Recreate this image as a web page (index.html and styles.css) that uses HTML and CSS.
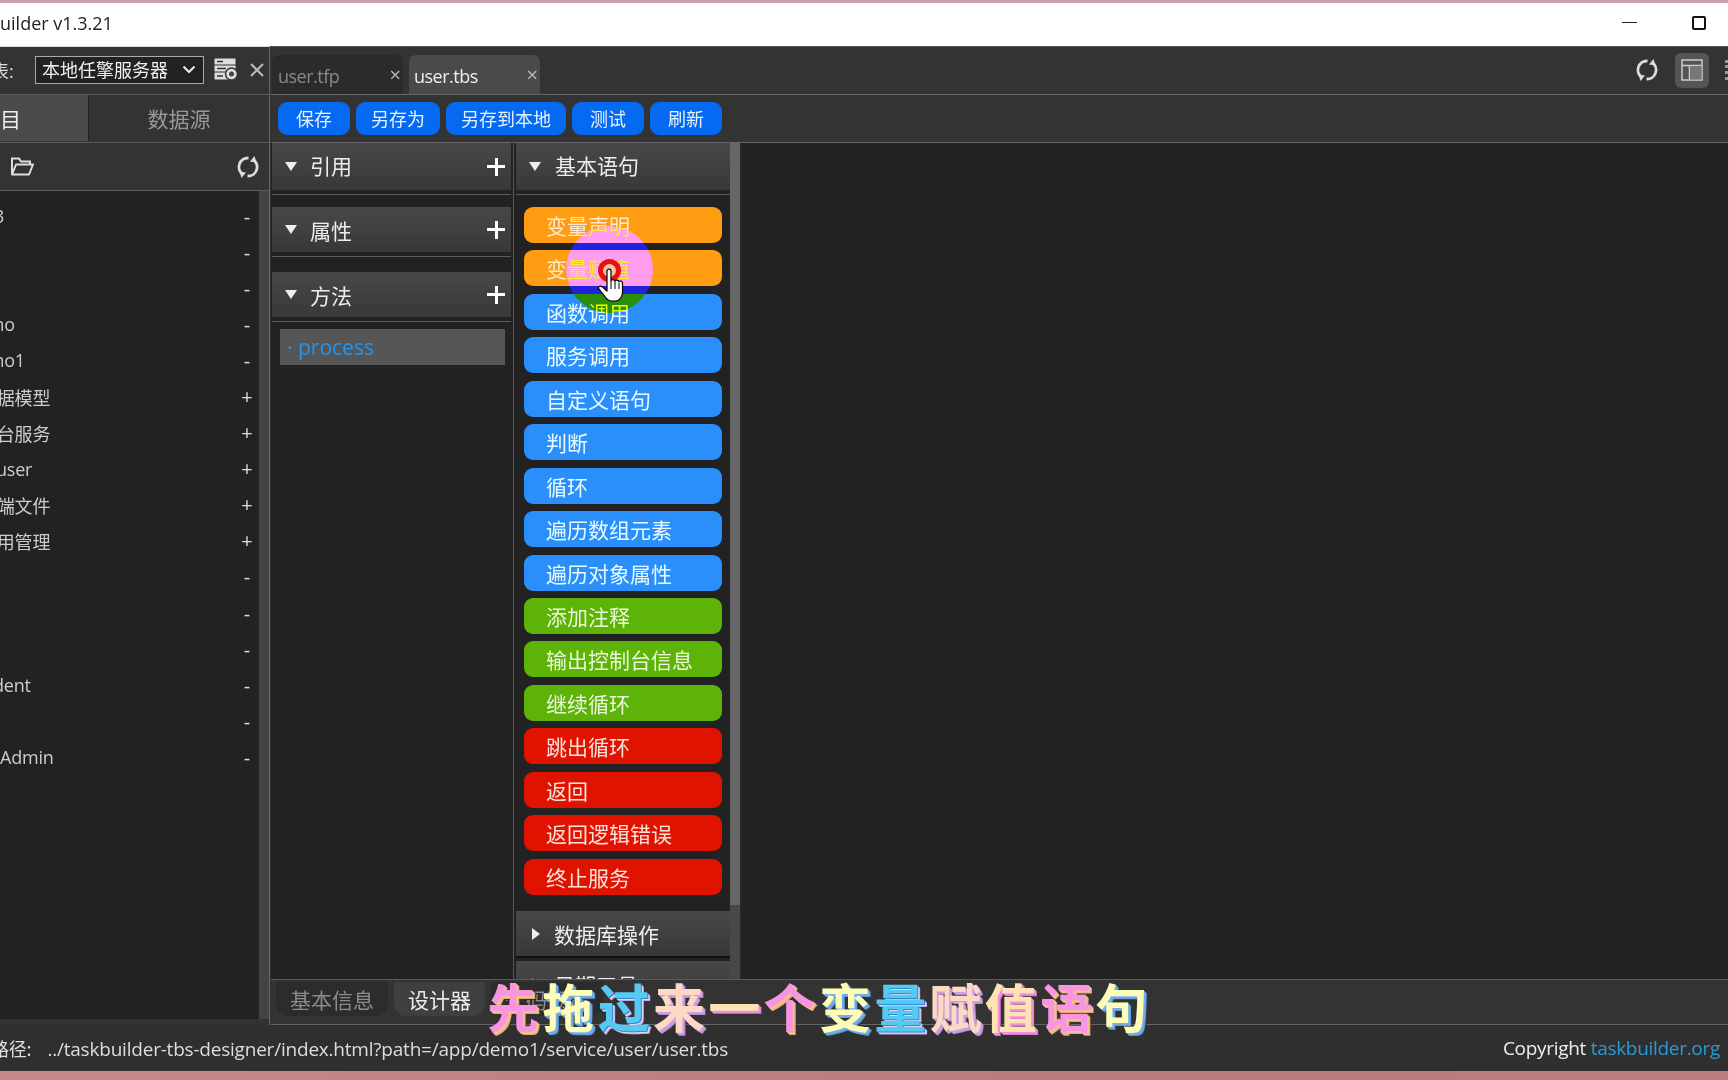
FILE: index.html
```html
<!DOCTYPE html>
<html lang="zh-CN">
<head>
<meta charset="utf-8">
<title>TaskBuilder</title>
<link rel="stylesheet" href="styles.css">
</head>
<body>
<div class="app">
  <div class="top-line"></div>
  <header class="titlebar">
    <span class="title">uilder v1.3.21</span>
    <div class="win-controls">
      <span class="win-min"></span>
      <span class="win-max"></span>
    </div>
  </header>

  <div class="main">
    <aside class="left">
      <div class="server-row">
        <span class="server-label">表:</span>
        <div class="select"><span>本地任擎服务器</span>
          <svg class="chevron" width="14" height="9" viewBox="0 0 14 9"><path d="M1.5 1.5 7 7l5.500-5.500" fill="none" stroke="#eee" stroke-width="2"/></svg>
        </div>
        <svg class="server-icon" width="24" height="23" viewBox="0 0 24 23">
          <rect x="0.500" y="0.500" width="21" height="6" fill="#ddd"/>
          <rect x="0.500" y="7.500" width="21" height="6" fill="#ddd"/>
          <rect x="0.500" y="14.500" width="21" height="7" fill="#ddd"/>
          <path d="M3 3.500h6M3 10.500h9M3 18h6" stroke="#333" stroke-width="1.500"/>
          <circle cx="17.500" cy="16" r="6" fill="#ddd" stroke="#333" stroke-width="1.500"/>
          <circle cx="17.500" cy="16" r="2.500" fill="#444"/>
        </svg>
        <svg class="close-icon" width="14" height="14" viewBox="0 0 14 14"><path d="M1 1l12 12M13 1 1 13" stroke="#bbb" stroke-width="2"/></svg>
      </div>
      <nav class="side-tabs">
        <div class="side-tab active"><span>目</span></div>
        <div class="side-tab">数据源</div>
      </nav>
      <div class="side-tools">
        <svg width="25" height="21" viewBox="0 0 25 21"><path d="M2 18V2.500h7l2 3h9v3" fill="none" stroke="#ddd" stroke-width="2"/><path d="M2 18.500 6 8.500h17l-4 10z" fill="none" stroke="#ddd" stroke-width="2" stroke-linejoin="round"/></svg>
        <svg width="24" height="24" viewBox="0 0 24 24"><path d="M12.500 3A9 9 0 0 0 7 19.500" fill="none" stroke="#ddd" stroke-width="2.800"/><path d="M11.500 21A9 9 0 0 0 17 4.500" fill="none" stroke="#ddd" stroke-width="2.800"/><path d="M3.500 16.500 10 17.500l-4.500 5.500zM20.500 7.500 14 6.500 18.500 1z" fill="#ddd"/></svg>
      </div>
      <div class="tree-wrap">
        <ul class="tree">
          <li><span class="cut-xs">3</span><b>-</b></li>
          <li><span></span><b>-</b></li>
          <li><span></span><b>-</b></li>
          <li><span class="cut-m">demo</span><b>-</b></li>
          <li><span class="cut-m">demo1</span><b>-</b></li>
          <li><span class="cut-l">数据模型</span><b>+</b></li>
          <li><span class="cut-l">后台服务</span><b>+</b></li>
          <li><span class="cut-u">user</span><b>+</b></li>
          <li><span class="cut-l">前端文件</span><b>+</b></li>
          <li><span class="cut-l">应用管理</span><b>+</b></li>
          <li><span></span><b>-</b></li>
          <li><span></span><b>-</b></li>
          <li><span></span><b>-</b></li>
          <li><span class="cut-s">dent</span><b>-</b></li>
          <li><span></span><b>-</b></li>
          <li><span>Admin</span><b>-</b></li>
        </ul>
        <div class="tree-scroll"></div>
      </div>
    </aside>

    <section class="work">
      <div class="file-tabs">
        <div class="file-tab"><span>user.tfp</span><i>×</i></div>
        <div class="file-tab active"><span>user.tbs</span><i>×</i></div>
        <div class="top-icons">
          <svg width="24" height="24" viewBox="0 0 24 24"><path d="M12.500 3A9 9 0 0 0 7 19.500" fill="none" stroke="#ddd" stroke-width="2.800"/><path d="M11.500 21A9 9 0 0 0 17 4.500" fill="none" stroke="#ddd" stroke-width="2.800"/><path d="M3.500 16.500 10 17.500l-4.500 5.500zM20.500 7.500 14 6.500 18.500 1z" fill="#ddd"/></svg>
          <div class="layout-btn">
            <svg width="22" height="22" viewBox="0 0 22 22"><rect x="1" y="1" width="20" height="20" fill="none" stroke="#ccc" stroke-width="1.500"/><path d="M1 6.500h20M8.500 6.500V21" stroke="#ccc" stroke-width="1.500"/><rect x="9" y="7" width="11.500" height="13.500" fill="#777"/></svg>
          </div>
          <span class="edge-dots"></span>
        </div>
      </div>
      <div class="actions">
        <button class="act act-2">保存</button>
        <button class="act act-3">另存为</button>
        <button class="act act-6">另存到本地</button>
        <button class="act act-2">测试</button>
        <button class="act act-2">刷新</button>
      </div>

      <div class="body">
        <div class="members">
          <div class="sec first"><span class="tri"></span><span class="sec-name">引用</span><span class="plus"></span></div>
          <div class="sec"><span class="tri"></span><span class="sec-name">属性</span><span class="plus"></span></div>
          <div class="sec"><span class="tri"></span><span class="sec-name">方法</span><span class="plus"></span></div>
          <div class="method"><span class="dot">·</span> process</div>
        </div>
        <div class="palette">
          <div class="pal-inner">
            <div class="sec first pal-head"><span class="tri"></span><span class="sec-name">基本语句</span></div>
            <div class="stmts">
              <div class="stmt orange">变量声明</div>
              <div class="stmt orange">变量赋值</div>
              <div class="stmt blue">函数调用</div>
              <div class="stmt blue">服务调用</div>
              <div class="stmt blue">自定义语句</div>
              <div class="stmt blue">判断</div>
              <div class="stmt blue">循环</div>
              <div class="stmt blue">遍历数组元素</div>
              <div class="stmt blue">遍历对象属性</div>
              <div class="stmt green">添加注释</div>
              <div class="stmt green">输出控制台信息</div>
              <div class="stmt green">继续循环</div>
              <div class="stmt red">跳出循环</div>
              <div class="stmt red">返回</div>
              <div class="stmt red">返回逻辑错误</div>
              <div class="stmt red">终止服务</div>
            </div>
            <div class="sec pal-head closed"><span class="tri right"></span><span class="sec-name">数据库操作</span></div>
            <div class="sec pal-head closed"><span class="tri right"></span><span class="sec-name">日期工具</span></div>
          </div>
          <div class="pal-scroll"><div class="pal-thumb"></div></div>
        </div>
        <div class="canvas"></div>
      </div>

      <div class="bottom-tabs">
        <div class="b-tab">基本信息</div>
        <div class="b-tab active">设计器</div>
        <div class="b-tab">代码预览</div>
      </div>
    </section>
  </div>

  <footer class="status">
    <span class="path"><span class="path-label">路径:</span>../taskbuilder-tbs-designer/index.html?path=/app/demo1/service/user/user.tbs</span>
    <span class="copy">Copyright <a>taskbuilder.org</a></span>
  </footer>
  <div class="strip"></div>

  <div class="halo"></div>
  <div class="click-ring"></div>
  <svg class="hand" width="28" height="36" viewBox="0 0 28 36">
    <path d="M9 3c0-2.500 4-2.500 4 0v10c0-2 4-2 4 .5 0-2 4-2 4 .5 0-1.500 3.500-1.500 3.500 1v9c0 4-2.500 9-7 9h-4c-3 0-5-2-7-5L1 21c-1.500-2.500 1.500-4 3.500-2L9 23z" fill="#fff" stroke="#000" stroke-width="1.200" stroke-linejoin="round"/>
    <path d="M13 13v8M17 14v7M21 15v6" stroke="#000" stroke-width="1"/>
  </svg>

  <div class="caption"><span class="c-pink">先</span><span class="c-yellow">拖</span><span class="c-sky">过</span><span class="c-peach">来</span><span class="c-sand">一</span><span class="c-pink">个</span><span class="c-yellow">变</span><span class="c-sky">量</span><span class="c-peach">赋</span><span class="c-sand">值</span><span class="c-pink">语</span><span class="c-yellow">句</span></div>
</div>
</body>
</html>
```

FILE: styles.css
```css
* { box-sizing: border-box; }
html, body { margin: 0; padding: 0; background: #222; }
body { font-family: "Open Sans", "Noto Sans CJK SC", sans-serif; }
.app {
  position: relative;
  width: 1728px;
  height: 1080px;
  overflow: hidden;
  display: flex;
  flex-direction: column;
  background: #222;
  font-family: "Open Sans", "Noto Sans CJK SC", sans-serif;
}
.top-line { height: 3px; background: #cda0ae; flex: none; }
.titlebar {
  flex: none;
  height: 43px;
  padding-bottom: 4px;
  background: #fff;
  display: flex;
  align-items: center;
  justify-content: space-between;
  color: #222;
  font-size: 18px;
}
.win-controls { display: flex; align-items: center; gap: 55px; padding-right: 22px; }
.win-min { width: 15px; height: 1.500px; background: #222; }
.win-max { width: 14px; height: 14px; border: 2px solid #111; border-radius: 2px; }

.main { flex: none; height: 979px; display: flex; border-top: 1px solid #555; }
.left { flex: none; width: 270px; display: flex; flex-direction: column; background: #333; border-right: 1px solid #666; border-top: 1px solid #ddd; margin-top: -1px; }
.server-row {
  flex: none;
  height: 48px;
  padding-bottom: 2px;
  display: flex;
  align-items: center;
  border-bottom: 1px solid #5a5a5a;
  color: #ddd;
  font-size: 18px;
}
.server-label { margin-left: -9px; flex: none; width: 44px; }
.select {
  width: 169px;
  height: 28px;
  border: 1px solid #aaa;
  background: #222;
  color: #eee;
  padding-left: 6px;
  padding-right: 7px;
  display: flex;
  align-items: center;
  justify-content: space-between;
  line-height: 26px;
}
.server-icon { margin-left: 10px; flex: none; }
.close-icon { margin-left: 12px; flex: none; }
.side-tabs { flex: none; height: 48px; display: flex; border-bottom: 1px solid #5a5a5a; padding-bottom: 1px; }
.side-tab { flex: 1; display: flex; align-items: center; justify-content: center; color: #999; font-size: 21px; }
.side-tab.active { flex: none; width: 89px; background: #4b4b4b; color: #eee; justify-content: flex-start; border-right: 1px solid #222; }
.side-tools {
  flex: none;
  height: 48px;
  padding: 0 9px 0 10px;
  display: flex;
  align-items: center;
  justify-content: space-between;
  border-bottom: 1px solid #5a5a5a;
}
.tree-wrap { flex: none; height: 828px; display: flex; }
.tree {
  list-style: none;
  margin: 0;
  padding: 7px 0 0;
  width: 259px;
  background: #222;
  overflow: hidden;
}
.tree li {
  height: 36.100px;
  display: flex;
  align-items: center;
  justify-content: space-between;
  color: #ccc;
  font-size: 18px;
  white-space: nowrap;
}
.tree li span { letter-spacing: -0.200px; }
.tree li b { width: 24px; text-align: center; font-weight: 400; font-size: 20px; color: #ddd; }
.cut-xs { margin-left: -6px; }
.cut-s { margin-left: -7px; }
.cut-m { margin-left: -33px; }
.cut-l { margin-left: -21px; }
.cut-u { margin-left: -4px; }
.tree-scroll { width: 10px; background: #444; }

.work { flex: 1; min-width: 0; display: flex; flex-direction: column; background: #333; border-left: 1px solid #333; }
.file-tabs {
  flex: none;
  height: 48px;
  display: flex;
  align-items: flex-end;
  padding-left: 1px;
  gap: 6px;
  border-bottom: 1px solid #666;
}
.file-tab {
  width: 131px;
  height: 39px;
  border-radius: 7px 7px 0 0;
  background: #2b2b2b;
  color: #8a8a8a;
  font-size: 18px;
  display: flex;
  align-items: center;
  justify-content: space-between;
  padding: 3px 2px 0 6px;
}
.file-tab.active { padding-left: 5px; }
.file-tab span { letter-spacing: -0.500px; }
.file-tab i { font-style: normal; font-size: 20px; color: #bbb; margin-top: -4px; }
.file-tab.active { background: #4a4a4a; color: #eee; }
.top-icons { margin-left: auto; align-self: center; display: flex; align-items: center; gap: 16px; padding-bottom: 1px; }
.layout-btn { width: 34px; height: 35px; border-radius: 6px; background: #555; display: flex; align-items: center; justify-content: center; }
.edge-dots { width: 3px; height: 20px; border-left: 3px dotted #999; }

.actions {
  flex: none;
  height: 48px;
  padding: 7px 6px 0 7px;
  display: flex;
  gap: 6px;
  border-bottom: 1px solid #666;
}
.act {
  height: 33px;
  border: 0;
  border-radius: 9px;
  background: #0669f2;
  color: #e6f3ff;
  font: 18px/33px "Noto Sans CJK SC", sans-serif;
  padding: 0;
}
.act-2 { width: 72px; }
.act-3 { width: 84px; }
.act-6 { width: 120px; }

.body { flex: none; height: 836px; display: flex; background: #222; padding-left: 1px; }
.members { flex: none; width: 242px; background: #222; border-right: 1px solid #555; margin-right: 2px; padding-right: 2px; }
.sec {
  height: 45px;
  display: flex;
  align-items: center;
  background: linear-gradient(#484848, #383838);
  color: #eee;
  font: 21px "Noto Sans CJK SC", sans-serif;
  padding-left: 13px;
  box-shadow: 0 4px 0 #222, 0 5px 0 #5c5c5c;
  margin-bottom: 20px;
}
.sec.first { height: 47px; margin-bottom: 17px; }
.sec.first .sec-name { margin-top: -3px; }
.tri { width: 0; height: 0; border-left: 6.500px solid transparent; border-right: 6.500px solid transparent; border-top: 9px solid #eee; margin-right: 13px; flex: none; }
.tri.right { border: 0; border-top: 6.500px solid transparent; border-bottom: 6.500px solid transparent; border-left: 8px solid #eee; margin-left: 3px; margin-right: 14px; }
.sec-name { flex: 1; }
.pal-head .sec-name { margin-left: 1px; }
.plus {
  flex: none;
  width: 18px;
  height: 18px;
  margin-right: 6px;
  background: linear-gradient(#fff, #fff) center / 100% 3px no-repeat, linear-gradient(#fff, #fff) center / 3px 100% no-repeat;
}
.method {
  width: 225px;
  height: 36px;
  margin: -8px 0 0 8px;
  background: #565656;
  color: #1e96f5;
  font-size: 21px;
  line-height: 36px;
  padding-left: 7px;
}
.palette { flex: none; width: 224px; display: flex; background: #222; }
.pal-inner { flex: none; width: 214px; overflow: hidden; }
.pal-head { padding-left: 13px; }
.pal-head.closed { height: 45px; margin-bottom: 5px; box-shadow: 0 2px 0 #111; }
.pal-head.closed .tri { margin-right: 13px; }
.stmts { padding: 0 8px; display: flex; flex-direction: column; gap: 7.450px; height: 704px; }
.stmt {
  height: 36px;
  border-radius: 9px;
  padding-left: 22px;
  font: 21px/36px "Noto Sans CJK SC", sans-serif;
  color: #f2f2f2;
  flex: none;
}
.orange { background: #ff9c12; color: #ffe9c8; }
.blue { background: #2a8ffb; color: #e8fbff; }
.green { background: #5eb309; color: #eaf7d8; }
.red { background: #df1300; color: #fbe3dc; }
.pal-scroll { flex: none; width: 10px; background: #484848; }
.pal-thumb { height: 762px; background: #666; }
.canvas { flex: 1; background: #222; border-left: 1px solid #2c2c2c; }

.bottom-tabs {
  flex: none;
  height: 46px;
  display: flex;
  gap: 6px;
  padding: 2px 0 0 5px;
  border-top: 1px solid #5a5a5a;
  border-bottom: 1px solid #666;
}
.b-tab {
  height: 34px;
  padding: 0 14px;
  border-radius: 0 0 12px 12px;
  color: #8c8c8c;
  background: #2c2c2c;
  font: 21px/34px "Noto Sans CJK SC", sans-serif;
}
.b-tab.active { background: #3f3f3f; color: #eee; }

.status {
  flex: none;
  height: 46px;
  background: #2f2f2f;
  display: flex;
  align-items: center;
  justify-content: space-between;
  font-size: 19px;
  color: #ddd;
  padding-right: 8px;
}
.path { margin-left: -9px; white-space: nowrap; letter-spacing: -0.210px; }
.path-label { font: 18px "Noto Sans CJK SC", sans-serif; margin-right: 16px; }
.copy { color: #eee; letter-spacing: -0.300px; }
.copy a { color: #2a9ad6; }
.strip { flex: 1; background: linear-gradient(90deg, #c48a8e, #b87c80 60%, #b97d80); }

.halo {
  position: absolute;
  left: 566px;
  top: 226px;
  width: 87px;
  height: 87px;
  border-radius: 50%;
  background: #0000ff;
  mix-blend-mode: difference;
}
.click-ring {
  position: absolute;
  left: 598px;
  top: 259px;
  width: 23px;
  height: 23px;
  border-radius: 50%;
  border: 5px solid #e31313;
  background: #f6c3a0;
}
.hand { position: absolute; left: 598px; top: 268px; }

.caption {
  position: absolute;
  left: 487px;
  top: 971px;
  display: flex;
  gap: 3.300px;
  font: 700 52px/70px "Noto Sans CJK SC", sans-serif;
  white-space: nowrap;
}
.c-pink { color: #f994e2; text-shadow: 1px 1px 0 #f2c08e, 2px 2px 0 #f2c08e, 3px 3px 0 #e0a878, 4px 4px 0 #333; }
.c-yellow { color: #fdfdb8; text-shadow: 1px 1px 0 #72aee8, 2px 2px 0 #72aee8, 3px 3px 0 #5a96d8, 4px 4px 0 #333; }
.c-sky { color: #56c9f2; text-shadow: 1px 1px 0 #2f8ccc, 2px 2px 0 #e6d4f2, 3px 3px 0 #c9a6e4, 4px 4px 0 #333; }
.c-peach { color: #fdd9c4; text-shadow: 1px 1px 0 #c9a0e2, 2px 2px 0 #c9a0e2, 3px 3px 0 #b78ad4, 4px 4px 0 #333; }
.c-sand { color: #fde2b2; text-shadow: 1px 1px 0 #f28fe0, 2px 2px 0 #f28fe0, 3px 3px 0 #d87cc8, 4px 4px 0 #333; }
```
